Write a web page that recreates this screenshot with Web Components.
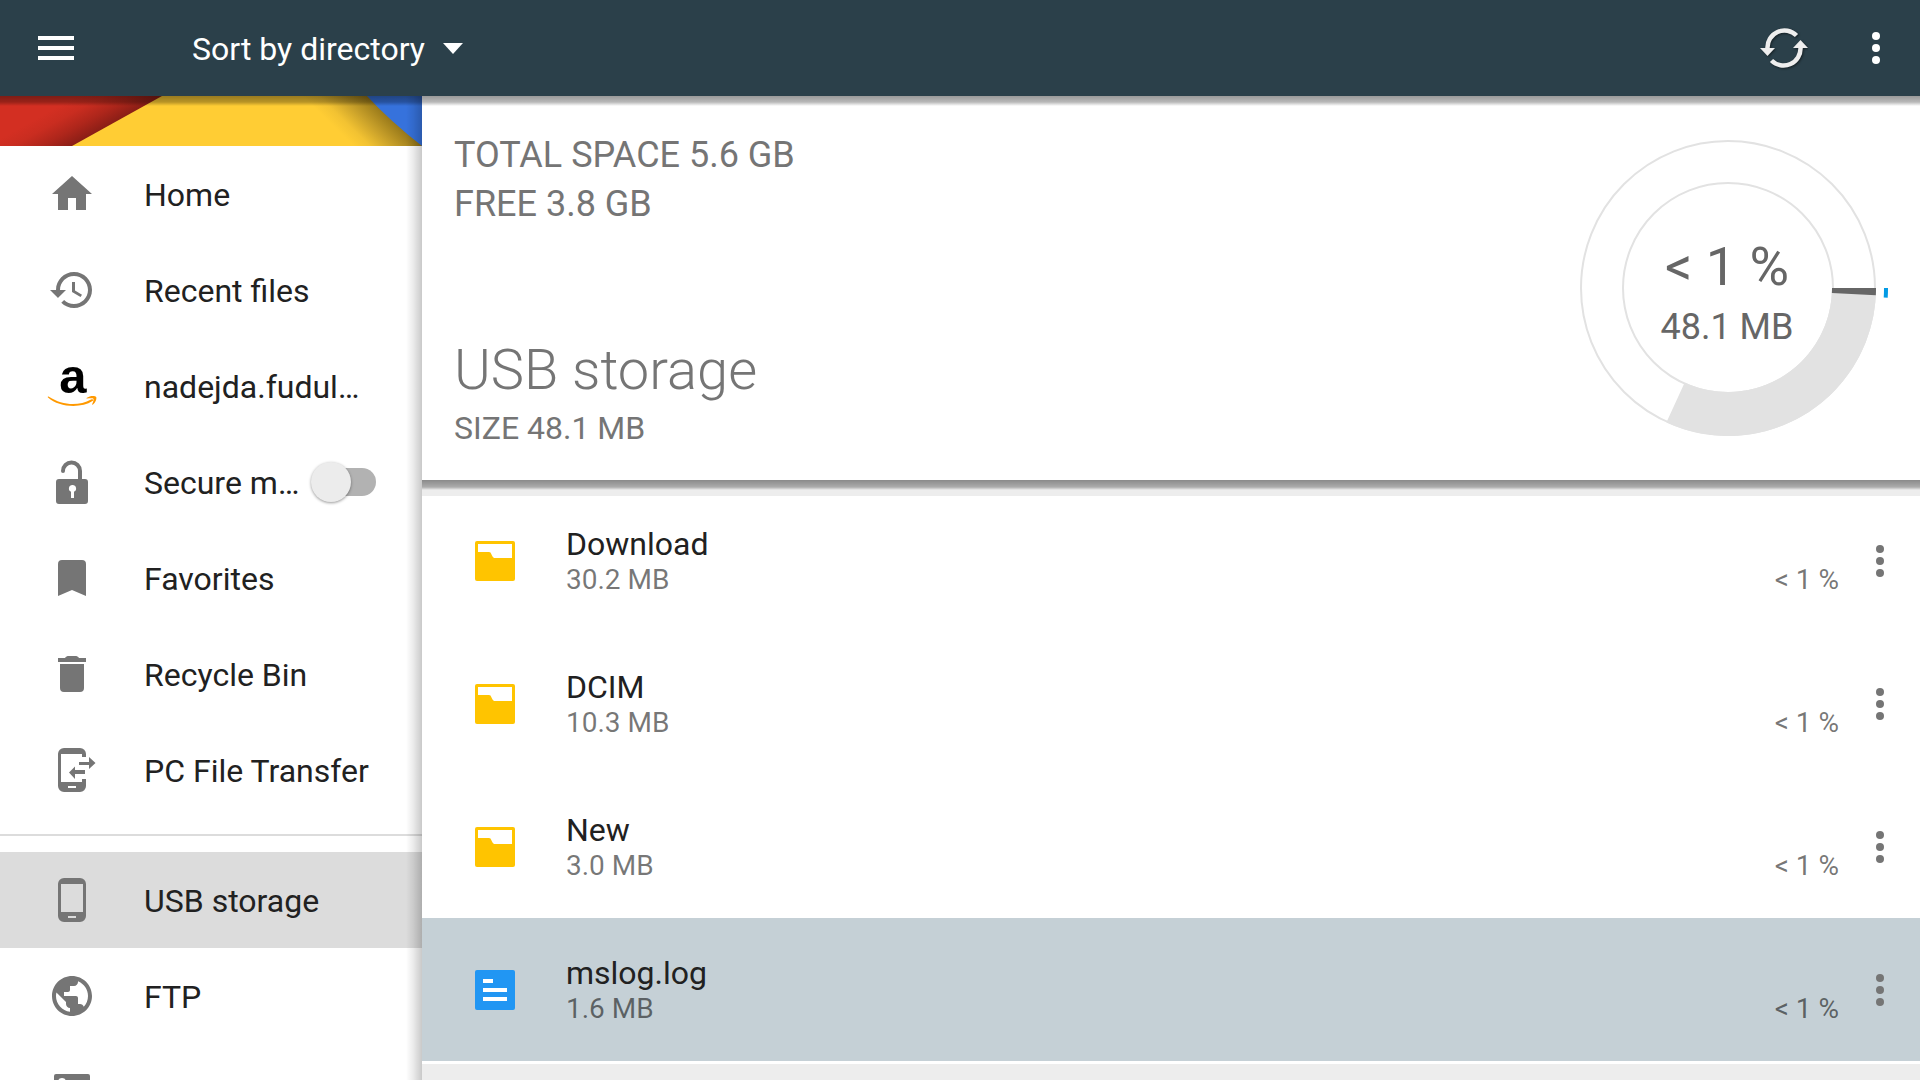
<!DOCTYPE html>
<html lang="en">
<head>
<meta charset="utf-8">
<title>USB storage</title>
<style>
	html, body {
		height: 100%;
		margin: 0;
	}

	body {
		background: #ededed;
		color: #212121;
		font: 32px/38px Roboto, "Liberation Sans", sans-serif;
		overflow: hidden;
	}
</style>
</head>
<body>
<storage-app>
	<tool-bar slot="bar"></tool-bar>
	<side-nav slot="nav">
		<nav-item icon="home">Home</nav-item>
		<nav-item icon="history">Recent files</nav-item>
		<nav-item icon="amazon">nadejda.fudul…</nav-item>
		<nav-item icon="lock" toggle>Secure m…</nav-item>
		<nav-item icon="bookmark">Favorites</nav-item>
		<nav-item icon="bin">Recycle Bin</nav-item>
		<nav-item icon="transfer">PC File Transfer</nav-item>
		<hr>
		<nav-item icon="phone" selected>USB storage</nav-item>
		<nav-item icon="globe">FTP</nav-item>
		<nav-item icon="server"></nav-item>
	</side-nav>
	<storage-summary>
		<span slot="total">TOTAL SPACE 5.6 GB</span>
		<span slot="free">FREE 3.8 GB</span>
		<span slot="name">USB storage</span>
		<span slot="size">SIZE 48.1 MB</span>
	</storage-summary>
	<file-list>
		<file-row icon="folder" size="30.2 MB" share="&lt; 1 %">Download</file-row>
		<file-row icon="folder" size="10.3 MB" share="&lt; 1 %">DCIM</file-row>
		<file-row icon="folder" size="3.0 MB" share="&lt; 1 %">New</file-row>
		<file-row icon="file" size="1.6 MB" share="&lt; 1 %" selected>mslog.log</file-row>
	</file-list>
</storage-app>

<script>
	const svg = (body, size = 24) => `<svg viewBox="0 0 ${size} ${size}" width="48" height="48" fill="currentColor" aria-hidden="true">${body}</svg>`;

	const icons = {
		menu: svg('<path d="M3 18h18v-2H3v2zm0-5h18v-2H3v2zm0-7v2h18V6H3z"/>'),
		more: svg('<circle cx="12" cy="6" r="2"/><circle cx="12" cy="12" r="2"/><circle cx="12" cy="18" r="2"/>'),
		refresh: svg(`
			<g style="filter: drop-shadow(1px 1px 1px rgba(0, 0, 0, .5))">
				<path d="M36.5 11.5A17 17 0 0 0 7.5 24.5M11.5 36.5A17 17 0 0 0 40.5 23.5" fill="none" stroke="currentColor" stroke-width="4.5"/>
				<path d="M0 24h15L7.5 32zM33 24h15L40.5 16z"/>
			</g>`, 48),
		home: svg('<path d="M10 20v-6h4v6h5v-8h3L12 3 2 12h3v8z"/>'),
		history: svg('<path d="M13 3c-4.97 0-9 4.03-9 9H1l3.89 3.89.07.14L9 12H6c0-3.87 3.13-7 7-7s7 3.13 7 7-3.13 7-7 7c-1.93 0-3.68-.79-4.94-2.06l-1.42 1.42C8.27 19.99 10.51 21 13 21c4.97 0 9-4.03 9-9s-4.03-9-9-9zm-1 5v5l4.28 2.54.72-1.21-3.5-2.08V8H12z"/>'),
		amazon: svg(`
			<text x="25" y="31" text-anchor="middle" fill="#000" font-family="Liberation Sans, sans-serif" font-size="49" font-weight="700">a</text>
			<path d="M.5 34.5C15 44 31 44 43 37.5c2-1 3 .5 1.500 1.500C33 46.500 11 45.500 0 35.500c-.5-.7 0-1.300.5-1zM38.500 36c3-2.500 8.500-2.500 9.500-1.300s0 5.300-3 7.800c-.7.5-1 .2-.8-.5.9-2 1.800-4.500 1.200-5.300s-3.500-.5-6.300-.2c-.7.1-.9-.2-.6-.5z" fill="#ff9900"/>`, 48),
		lock: svg(`
			<path d="M15 13a8.500 8.500 0 0 1 17 0v8" fill="none" stroke="currentColor" stroke-width="4" stroke-linecap="round"/>
			<path fill-rule="evenodd" d="M11 21h26a3 3 0 0 1 3 3v19a3 3 0 0 1-3 3H11a3 3 0 0 1-3-3V24a3 3 0 0 1 3-3zm13.500 6a3.500 3.500 0 0 0-1.500 6.700V40h3v-6.300A3.500 3.500 0 0 0 24.500 27z"/>`, 48),
		bookmark: svg('<path d="M17 3H7a2 2 0 0 0-2 2v16l7-3 7 3V5a2 2 0 0 0-2-2z"/>'),
		bin: svg('<path d="M6 19a2 2 0 0 0 2 2h8a2 2 0 0 0 2-2V7H6zM5 4h3.500c.5-.7 1-1 2-1h3c1 0 1.500.3 2 1H19v2H5z"/>'),
		transfer: svg(`
			<path fill-rule="evenodd" d="M16 2h16a6 6 0 0 1 6 6v3h-4V8H13v28h21v-3h4v7a6 6 0 0 1-6 6H16a6 6 0 0 1-6-6V8a6 6 0 0 1 6-6zm4 38v2h8v-2z"/>
			<path d="M31 16h10v-5l6.500 6-6.500 6v-4H31zM37 24v4H27v5l-6-6.500 6-6V24z"/>`, 48),
		phone: svg('<path fill-rule="evenodd" d="M16 2h16a6 6 0 0 1 6 6v32a6 6 0 0 1-6 6H16a6 6 0 0 1-6-6V8a6 6 0 0 1 6-6zm-3 6v28h22V8zm7 32v2h8v-2z"/>', 48),
		globe: svg('<path d="M12 2C6.480 2 2 6.480 2 12s4.480 10 10 10 10-4.480 10-10S17.520 2 12 2zm-1 17.930c-3.950-.49-7-3.850-7-7.930 0-.62.08-1.210.21-1.790L9 15v1c0 1.100.9 2 2 2v1.930zm6.900-2.540c-.26-.81-1-1.390-1.900-1.390h-1v-3c0-.55-.45-1-1-1H8v-2h2c.55 0 1-.45 1-1V7h2c1.100 0 2-.9 2-2v-.41c2.930 1.190 5 4.060 5 7.410 0 2.080-.8 3.970-2.100 5.390z"/>'),
		server: svg('<path fill-rule="evenodd" d="M4 3h16a1 1 0 0 1 1 1v6a1 1 0 0 1-1 1H4a1 1 0 0 1-1-1V4a1 1 0 0 1 1-1zm3 2a2 2 0 1 0 0 4 2 2 0 0 0 0-4zM4 13h16a1 1 0 0 1 1 1v6a1 1 0 0 1-1 1H4a1 1 0 0 1-1-1v-6a1 1 0 0 1 1-1zm3 2a2 2 0 1 0 0 4 2 2 0 0 0 0-4z"/>'),
		folder: svg('<rect x="4" y="4" width="40" height="40" rx="2" fill="#ffc400"/><path d="M7 7h34v14H23l-1.500-1.500-2-4L18 15H7z" fill="#fff"/>', 48),
		file: svg('<rect x="4" y="4" width="40" height="40" rx="2" fill="#2196f3"/><path d="M12 13h10v4H12zM12 22h24v4H12zM12 31h24v4H12z" fill="#fff"/>', 48)
	};

	const base = `
		*, *::before, *::after { box-sizing: border-box; }
		svg { display: block; flex: none; }
		button {
			padding: 0;
			border: 0;
			background: none;
			color: inherit;
			font: inherit;
			cursor: pointer;
		}
	`;

	class BaseElement extends HTMLElement {
		constructor() {
			super();
			this.attachShadow({mode: 'open'});
		}

		connectedCallback() {
			this.shadowRoot.innerHTML = `<style>${base}</style>${this.render()}`;
		}
	}

	class StorageApp extends BaseElement {
		render() {
			return `
				<style>
					:host {
						display: grid;
						grid-template: auto minmax(0, 1fr) / 422px minmax(0, 1fr);
						height: 100vh;
					}
					slot[name="bar"] {
						display: block;
						grid-column: 1 / -1;
						position: relative;
						z-index: 2;
					}
					main { overflow: hidden; }
				</style>
				<slot name="bar"></slot>
				<slot name="nav"></slot>
				<main><slot></slot></main>
			`;
		}
	}

	class ToolBar extends BaseElement {
		render() {
			return `
				<style>
					:host { display: block; }
					header {
						position: relative;
						display: flex;
						align-items: center;
						height: 96px;
						padding: 0 20px 0 32px;
						background: #2b404a;
						color: #fff;
					}
					/* shadow that falls on the content below */
					header::after {
						content: "";
						position: absolute;
						inset: 100% 0 auto;
						height: 10px;
						background: linear-gradient(rgba(0, 0, 0, .4), rgba(0, 0, 0, .28) 60%, transparent);
						pointer-events: none;
					}
					.sort {
						display: flex;
						align-items: center;
						gap: 18px;
						flex: 1;
						margin-left: 112px;
					}
					select {
						appearance: none;
						padding: 2px 0 0;
						border: 0;
						background: none;
						color: inherit;
						font: inherit;
					}
					.actions {
						display: flex;
						gap: 44px;
					}
					.refresh { color: #eee; }
				</style>
				<header>
					<button type="button" aria-label="Menu">${icons.menu}</button>
					<div class="sort">
						<select aria-label="Sort order"><option>Sort by directory</option></select>
						<svg width="20" height="11" viewBox="0 0 20 11" fill="currentColor" aria-hidden="true"><path d="M0 0h20L10 11z"/></svg>
					</div>
					<div class="actions">
						<button type="button" class="refresh" aria-label="Refresh">${icons.refresh}</button>
						<button type="button" aria-label="More">${icons.more}</button>
					</div>
				</header>
			`;
		}
	}

	class SideNav extends BaseElement {
		render() {
			return `
				<style>
					:host {
						display: block;
						position: relative;
						background: #fff;
						overflow: hidden;
					}
					/* shade cast by the content pane */
					:host::after {
						content: "";
						position: absolute;
						inset: 0 0 0 auto;
						width: 16px;
						background: linear-gradient(90deg, transparent, rgba(0, 0, 0, .08) 45%, rgba(0, 0, 0, .21));
						pointer-events: none;
					}
					.banner {
						width: 100%;
						height: 50px;
					}
					::slotted(hr) {
						height: 2px;
						margin: 16px 0;
						border: 0;
						background: #dcdcdc;
					}
				</style>
				<svg class="banner" viewBox="0 0 422 50" preserveAspectRatio="none" aria-hidden="true">
					<defs>
						<linearGradient id="red" gradientUnits="userSpaceOnUse" x1="117" y1="25" x2="97" y2="-11">
							<stop offset="0" stop-color="#8a1e16"/>
							<stop offset=".35" stop-color="#ae261b"/>
							<stop offset=".7" stop-color="#c92d20"/>
							<stop offset="1" stop-color="#d32f22"/>
						</linearGradient>
						<linearGradient id="yellow" gradientUnits="userSpaceOnUse" x1="394" y1="25" x2="362" y2="58">
							<stop offset="0" stop-color="#967719"/>
							<stop offset=".4" stop-color="#c79f29"/>
							<stop offset=".75" stop-color="#f2c232"/>
							<stop offset="1" stop-color="#ffcd34"/>
						</linearGradient>
					</defs>
					<path d="M0 0h170v50H0z" fill="url(#red)"/>
					<path d="M162 0h260v50H72z" fill="url(#yellow)"/>
					<path d="M367 0Q390 25 422 50V0z" fill="#3672dc"/>
				</svg>
				<nav><slot></slot></nav>
			`;
		}
	}

	class NavItem extends BaseElement {
		render() {
			const tag = this.hasAttribute('toggle') ? 'label' : 'a href="#"';

			return `
				<style>
					:host { display: block; }
					:host([selected]) { background: #dcdcdc; }
					.item {
						display: flex;
						align-items: center;
						height: 96px;
						padding: 0 46px 0 48px;
						color: inherit;
						text-decoration: none;
						white-space: nowrap;
					}
					.item svg {
						margin-right: 48px;
						color: #757575;
						overflow: visible;
					}
					.text {
						flex: 1;
						padding-top: 2px;
					}
					input {
						appearance: none;
						position: relative;
						width: 62px;
						height: 28px;
						margin: 0;
						border-radius: 14px;
						background: #b2b2b2;
					}
					input::before {
						content: "";
						position: absolute;
						left: -3px;
						top: -6px;
						width: 40px;
						height: 40px;
						border-radius: 50%;
						background: #ececec;
						box-shadow: 0 1px 3px rgba(0, 0, 0, .4);
					}
				</style>
				<${tag} class="item">
					${icons[this.getAttribute('icon')]}
					<span class="text"><slot></slot></span>
					${this.hasAttribute('toggle') ? '<input type="checkbox" role="switch">' : ''}
				</${tag.split(' ')[0]}>
			`;
		}
	}

	class StorageSummary extends BaseElement {
		/* ring sector between two radii, angles in degrees clockwise from 3 o'clock */
		sector(inner, outer, from, to) {
			const point = (r, deg) => {
				const a = deg * Math.PI / 180;
				return `${148 + r * Math.cos(a)} ${148 + r * Math.sin(a)}`;
			};

			return `M${point(outer, from)}A${outer} ${outer} 0 0 1 ${point(outer, to)}L${point(inner, to)}A${inner} ${inner} 0 0 0 ${point(inner, from)}z`;
		}

		render() {
			return `
				<style>
					:host { display: block; }
					section {
						position: relative;
						z-index: 1;
						display: flex;
						align-items: center;
						justify-content: space-between;
						min-height: 384px;
						padding: 0 32px;
						background: #fff;
						color: #757575;
					}
					section::after {
						content: "";
						position: absolute;
						inset: 100% 0 auto;
						height: 10px;
						background: linear-gradient(rgba(0, 0, 0, .42), rgba(0, 0, 0, .28) 70%, transparent);
					}
					.info {
						display: flex;
						flex-direction: column;
						justify-content: space-between;
						align-self: stretch;
						padding: 35px 0 33px;
					}
					p, h1 { margin: 0; }
					.space {
						font-size: 36px;
						line-height: 49px;
					}
					h1 {
						margin-bottom: 6px;
						font-size: 56px;
						font-weight: 300;
						line-height: 66px;
					}
					.ring text {
						fill: #666;
						text-anchor: middle;
					}
				</style>
				<section>
					<div class="info">
						<div class="space">
							<p><slot name="total"></slot></p>
							<p><slot name="free"></slot></p>
						</div>
						<div>
							<h1><slot name="name"></slot></h1>
							<p><slot name="size"></slot></p>
						</div>
					</div>
					<svg class="ring" width="308" height="296" viewBox="0 0 308 296">
						<g fill="none" stroke="#e2e2e2" stroke-width="2">
							<circle cx="148" cy="148" r="147"/>
							<circle cx="148" cy="148" r="105"/>
						</g>
						<path d="${this.sector(104, 148, 0, 114.6)}" fill="#e2e2e2"/>
						<path d="${this.sector(104, 148, 0, 2.8)}" fill="#666"/>
						<path d="${this.sector(156, 160, 0, 3.5)}" fill="#039be5"/>
						<text x="147" y="145" font-size="54">&lt; 1 %</text>
						<text x="147" y="199" font-size="36">48.1 MB</text>
					</svg>
				</section>
			`;
		}
	}

	class FileList extends BaseElement {
		render() {
			return `
				<style>
					:host {
						display: flow-root;
						margin-top: 16px;
						padding-bottom: 3px;
						background: #fff;
					}
					/* the first row is tucked under the card's top edge */
					.rows { margin-top: -7px; }
				</style>
				<div class="rows" role="list"><slot></slot></div>
			`;
		}
	}

	class FileRow extends BaseElement {
		render() {
			return `
				<style>
					:host { display: block; }
					:host([selected]) { background: #c5d0d6; }
					.row {
						display: flex;
						align-items: center;
						height: 143px;
						padding: 0 16px 0 49px;
					}
					.text {
						flex: 1;
						margin-left: 47px;
					}
					.meta {
						display: flex;
						justify-content: space-between;
						margin-right: 17px;
						color: rgba(0, 0, 0, .54);
						font-size: 28px;
						line-height: 33px;
					}
					button { color: #757575; }
				</style>
				<div class="row" role="listitem">
					${icons[this.getAttribute('icon')]}
					<div class="text">
						<div><slot></slot></div>
						<div class="meta"><span>${this.getAttribute('size')}</span><span>${this.getAttribute('share').replace('<', '&lt;')}</span></div>
					</div>
					<button type="button" aria-label="More">${icons.more}</button>
				</div>
			`;
		}
	}

	customElements.define('storage-app', StorageApp);
	customElements.define('tool-bar', ToolBar);
	customElements.define('side-nav', SideNav);
	customElements.define('nav-item', NavItem);
	customElements.define('storage-summary', StorageSummary);
	customElements.define('file-list', FileList);
	customElements.define('file-row', FileRow);
</script>
</body>
</html>
